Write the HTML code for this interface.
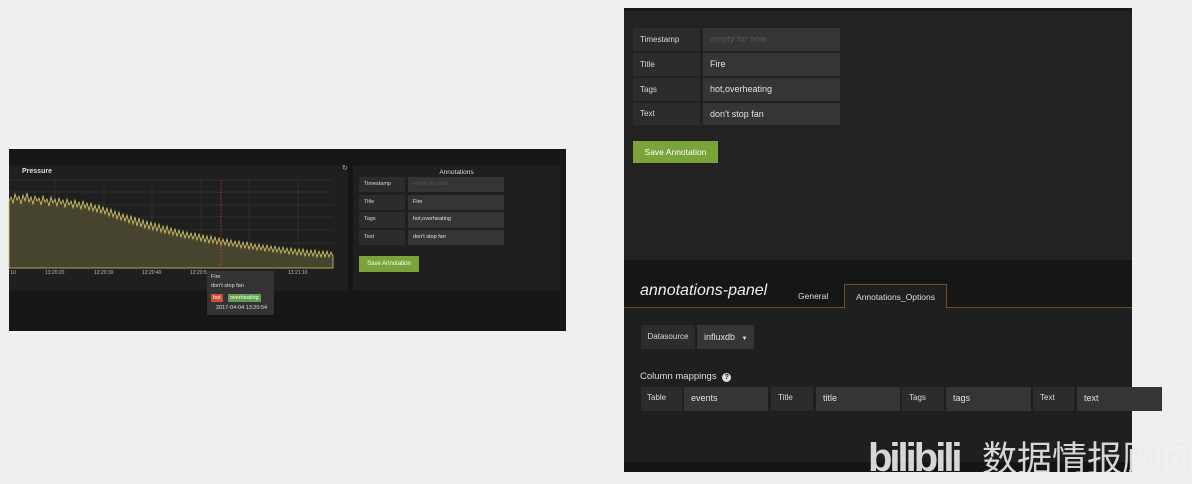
<!DOCTYPE html>
<html><head><meta charset="utf-8"><style>
*{margin:0;padding:0;box-sizing:border-box}
html,body{width:1192px;height:484px;overflow:hidden}
body{background:#efefef;position:relative;font-family:"Liberation Sans",sans-serif}
.a{position:absolute;white-space:nowrap}
.lb{position:absolute;background:#2c2c2c;color:#d8d8d8;white-space:nowrap}
.vb{position:absolute;background:#353535;color:#e0e0e0;white-space:nowrap}
</style></head><body>
<div class="a" style="left:9px;top:149px;width:557px;height:182px;background:#161616"></div>
<div class="a" style="left:9px;top:165px;width:339px;height:126px;background:#1f1f1f"></div>
<div class="a" style="left:353px;top:165px;width:207px;height:126px;background:#1f1f1f"></div>
<div class="a" style="left:22px;top:168px;font-size:7px;color:#ddd;font-weight:bold">Pressure</div>
<div class="a" style="left:342px;top:164px;font-size:7px;color:#aaa">↻</div>
<svg class="a" style="left:0;top:0" width="566" height="331">
<g stroke="#3a3a33" stroke-width="0.6">
<line x1="9" y1="180" x2="333" y2="180"/><line x1="9" y1="192" x2="333" y2="192"/><line x1="9" y1="205" x2="333" y2="205"/><line x1="9" y1="217" x2="333" y2="217"/><line x1="9" y1="230" x2="333" y2="230"/><line x1="9" y1="243" x2="333" y2="243"/><line x1="9" y1="255" x2="333" y2="255"/><line x1="9" y1="268" x2="333" y2="268"/>
<line x1="55" y1="180" x2="55" y2="268"/><line x1="104" y1="180" x2="104" y2="268"/><line x1="152" y1="180" x2="152" y2="268"/><line x1="201" y1="180" x2="201" y2="268"/><line x1="249" y1="180" x2="249" y2="268"/><line x1="298" y1="180" x2="298" y2="268"/>
</g>
<path d="M9,201 L11,197 L13,203 L15,194 L17,200 L19,196 L21,204 L23,195 L25,201 L27,193 L29,202 L31,197 L33,204 L35,196 L37,201 L39,198 L41,205 L43,196 L45,202 L47,199 L49,206 L51,197 L53,203 L55,199 L57,206 L59,198 L61,204 L63,200 L65,207 L67,199 L69,205 L71,201 L73,208 L75,200 L77,207 L79,202 L81,209 L83,201 L85,208 L87,203 L89,210 L91,203 L93,211 L95,205 L97,212 L99,205 L101,213 L103,207 L105,214 L107,208 L109,216 L111,209 L113,217 L115,211 L117,219 L119,212 L121,220 L123,214 L125,221 L127,215 L129,223 L131,216 L133,224 L135,217 L137,226 L139,218 L141,227 L143,220 L145,228 L147,221 L149,229 L151,222 L153,230 L155,223 L157,231 L159,224 L161,232 L163,226 L165,233 L167,226 L169,234 L171,228 L173,235 L175,229 L177,236 L179,230 L181,237 L183,231 L185,238 L187,232 L189,238 L191,233 L193,239 L195,233 L197,240 L199,234 L201,241 L203,235 L205,242 L207,236 L209,243 L211,236 L213,243 L215,237 L217,244 L219,238 L221,245 L223,239 L225,245 L227,239 L229,246 L231,240 L233,246 L235,241 L237,247 L239,241 L241,248 L243,242 L245,248 L247,242 L249,249 L251,243 L253,249 L255,244 L257,250 L259,244 L261,250 L263,245 L265,251 L267,245 L269,251 L271,246 L273,252 L275,246 L277,252 L279,247 L281,253 L283,247 L285,253 L287,248 L289,254 L291,248 L293,254 L295,249 L297,255 L299,249 L301,255 L303,249 L305,256 L307,250 L309,256 L311,250 L313,256 L315,250 L317,257 L319,251 L321,257 L323,251 L325,257 L327,251 L329,257 L331,252 L333,256 L333,268 L9,268 Z" fill="#46442e" stroke="#d8c86a" stroke-width="0.8"/>
<line x1="221" y1="180" x2="221" y2="268" stroke="#d44" stroke-width="0.7" stroke-dasharray="1.5,1.5"/>
</svg>
<div class="a" style="top:270px;left:0;font-size:5px;color:#bbb;width:340px">
<span class="a" style="left:9px">:10</span><span class="a" style="left:45px">13:20:20</span><span class="a" style="left:94px">13:20:30</span><span class="a" style="left:142px">13:20:40</span><span class="a" style="left:190px">13:20:5</span><span class="a" style="left:288px">13:21:10</span></div>
<div class="a" style="left:207px;top:271px;width:67px;height:44px;background:#333;font-size:5.5px;color:#ddd">
<div class="a" style="left:4px;top:3px">Fire</div>
<div class="a" style="left:4px;top:12px">don't stop fan</div>
<div class="a" style="left:4px;top:23px;background:#d44a3a;color:#fff;padding:0 2px;height:8px;line-height:8px">hot</div>
<div class="a" style="left:21px;top:23px;background:#629e51;color:#fff;padding:0 2px;height:8px;line-height:8px">overheating</div>
<div class="a" style="left:9px;top:34px">2017-04-04 13:20:54</div></div>
<div class="a" style="left:353px;top:169px;width:207px;text-align:center;font-size:6.5px;color:#ddd">Annotations</div>
<div class="lb" style="left:359px;top:177px;width:46px;height:15px;font-size:5.5px;padding:4px 5px">Timestamp</div>
<div class="vb" style="left:408px;top:177px;width:96px;height:15px;font-size:5.5px;padding:4px 5px;color:#555">empty for now</div>
<div class="lb" style="left:359px;top:195px;width:46px;height:15px;font-size:5.5px;padding:4px 5px">Title</div>
<div class="vb" style="left:408px;top:195px;width:96px;height:15px;font-size:5.5px;padding:4px 5px">Fire</div>
<div class="lb" style="left:359px;top:212px;width:46px;height:16px;font-size:5.5px;padding:4px 5px">Tags</div>
<div class="vb" style="left:408px;top:212px;width:96px;height:16px;font-size:5.5px;padding:4px 5px">hot,overheating</div>
<div class="lb" style="left:359px;top:230px;width:46px;height:15px;font-size:5.5px;padding:4px 5px">Text</div>
<div class="vb" style="left:408px;top:230px;width:96px;height:15px;font-size:5.5px;padding:4px 5px">don't stop fan</div>
<div class="a" style="left:359px;top:256px;width:60px;height:16px;background:#7aa33a;color:#fff;font-size:6px;line-height:16px;text-align:center">Save Annotation</div>

<div class="a" style="left:624px;top:8px;width:508px;height:464px;background:#222"></div>
<div class="a" style="left:624px;top:8px;width:508px;height:3px;background:#181818"></div>
<div class="a" style="left:624px;top:260px;width:508px;height:47px;background:#161616"></div>
<div class="a" style="left:624px;top:307px;width:508px;height:1px;background:#6b4e2a"></div>
<div class="a" style="left:624px;top:308px;width:508px;height:154px;background:#1f1f1f"></div>
<div class="a" style="left:624px;top:462px;width:508px;height:10px;background:#141414"></div>
<div class="lb" style="left:633px;top:28px;width:67px;height:23px;font-size:8px;padding:7px 7px">Timestamp</div>
<div class="vb" style="left:703px;top:28px;width:137px;height:23px;font-size:9px;padding:6px 7px;color:#555">empty for now</div>
<div class="lb" style="left:633px;top:53px;width:67px;height:23px;font-size:8px;padding:7px 7px">Title</div>
<div class="vb" style="left:703px;top:53px;width:137px;height:23px;font-size:9px;padding:6px 7px">Fire</div>
<div class="lb" style="left:633px;top:78px;width:67px;height:23px;font-size:8px;padding:7px 7px">Tags</div>
<div class="vb" style="left:703px;top:78px;width:137px;height:23px;font-size:9px;padding:6px 7px">hot,overheating</div>
<div class="lb" style="left:633px;top:103px;width:67px;height:22px;font-size:8px;padding:6px 7px">Text</div>
<div class="vb" style="left:703px;top:103px;width:137px;height:22px;font-size:9px;padding:6px 7px">don't stop fan</div>
<div class="a" style="left:633px;top:141px;width:85px;height:22px;background:#7aa33a;color:#fff;font-size:8.5px;line-height:22px;text-align:center">Save Annotation</div>
<div class="a" style="left:640px;top:282px;font-size:16px;font-style:italic;color:#eee">annotations-panel</div>
<div class="a" style="left:798px;top:291px;font-size:8.5px;color:#ddd">General</div>
<div class="a" style="left:844px;top:284px;width:103px;height:24px;background:#1f1f1f;border:1px solid #6b4e2a;border-bottom:none;font-size:8.5px;color:#ddd;text-align:center;line-height:24px">Annotations_Options</div>
<div class="lb" style="left:641px;top:325px;width:54px;height:24px;font-size:8px;line-height:24px;text-align:center">Datasource</div>
<div class="vb" style="left:697px;top:325px;width:57px;height:24px;font-size:9px;line-height:24px;padding-left:7px">influxdb <span style="font-size:6px;margin-left:4px">▼</span></div>
<div class="a" style="left:640px;top:371px;font-size:9.5px;color:#ddd">Column mappings <span style="display:inline-block;width:9px;height:9px;border-radius:50%;background:#ddd;color:#222;font-size:7px;line-height:9px;text-align:center;font-weight:bold;margin-left:3px">?</span></div>
<div class="lb" style="left:641px;top:387px;width:41px;height:24px;font-size:8px;line-height:22px;padding-left:6px">Table</div>
<div class="vb" style="left:684px;top:387px;width:84px;height:24px;font-size:9px;line-height:22px;padding-left:7px">events</div>
<div class="lb" style="left:771px;top:387px;width:42px;height:24px;font-size:8px;line-height:22px;padding-left:7px">Title</div>
<div class="vb" style="left:816px;top:387px;width:84px;height:24px;font-size:9px;line-height:22px;padding-left:7px">title</div>
<div class="lb" style="left:902px;top:387px;width:42px;height:24px;font-size:8px;line-height:22px;padding-left:7px">Tags</div>
<div class="vb" style="left:946px;top:387px;width:85px;height:24px;font-size:9px;line-height:22px;padding-left:7px">tags</div>
<div class="lb" style="left:1033px;top:387px;width:41px;height:24px;font-size:8px;line-height:22px;padding-left:7px">Text</div>
<div class="vb" style="left:1077px;top:387px;width:85px;height:24px;font-size:9px;line-height:22px;padding-left:7px">text</div>
<div class="a" style="left:868px;top:434px;font-size:40px;line-height:48px;font-weight:bold;color:rgba(235,235,235,0.9);letter-spacing:-3px">bilibili</div>
<div class="a" style="left:982px;top:436px;font-size:35px;color:rgba(235,235,235,0.9);font-family:'Liberation Sans','Noto Sans CJK SC',sans-serif;line-height:48px">数据情报顾问</div>
</body></html>
